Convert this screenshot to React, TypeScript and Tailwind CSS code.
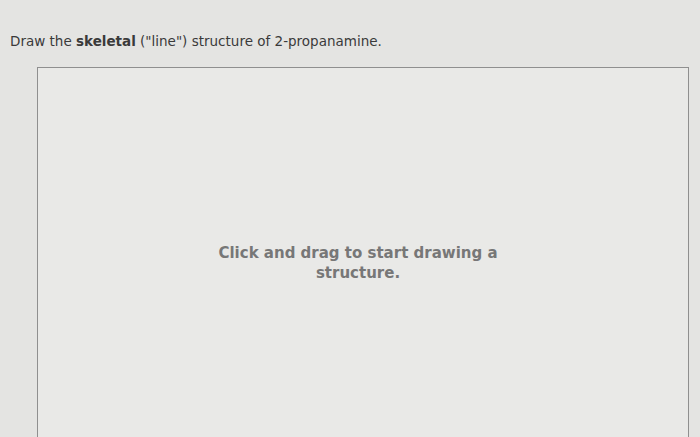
export default function App() {
  return (
    <div className="w-[700px] h-[437px] overflow-hidden bg-[#e4e4e2] font-['DejaVu_Sans',sans-serif]">
      <p className="pl-[10px] pt-[33px] text-[13.5px] leading-[16px] text-[#3a3a3a]">
        Draw the <span className="font-bold">skeletal</span> ("line") structure of 2-propanamine.
      </p>
      <div className="ml-[37px] mt-[18px] w-[652px] h-[380px] border-[1.5px] border-[#8f8f8f] bg-[#e9e9e7] flex flex-col items-center">
        <div className="mt-[175px] w-[300px] text-center text-[15px] leading-[20px] font-bold text-[#777777] pr-[10px]">
          Click and drag to start drawing a structure.
        </div>
      </div>
    </div>
  )
}
